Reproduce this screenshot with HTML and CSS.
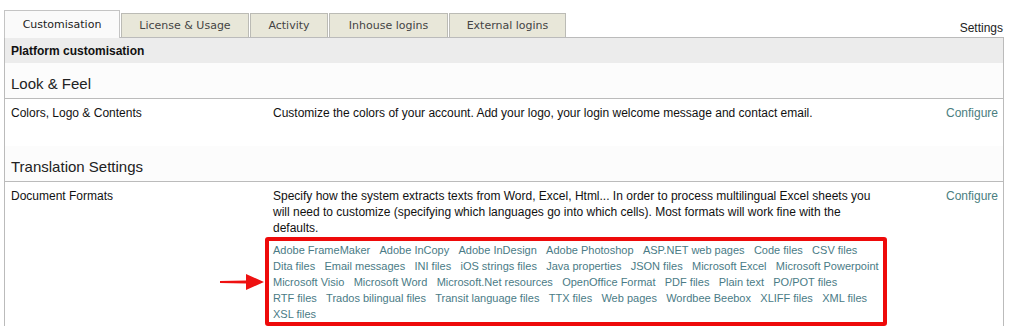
FILE: index.html
```html
<!DOCTYPE html>
<html>
<head>
<meta charset="utf-8">
<link rel="stylesheet" href="styles.css">
</head>
<body>
<div class="page">
  <div class="tabbar">
    <div class="tab active tab-cust">Customisation</div>
    <div class="tab tab-lic">License &amp; Usage</div>
    <div class="tab tab-act">Activity</div>
    <div class="tab tab-in">Inhouse logins</div>
    <div class="tab tab-ext">External logins</div>
    <div class="settings">Settings</div>
  </div>
  <div class="panel">
    <div class="panel-head">Platform customisation</div>
    <div class="section-title">Look &amp; Feel</div>
    <div class="row row-first">
      <div class="label">Colors, Logo &amp; Contents</div>
      <div class="desc">Customize the colors of your account. Add your logo, your login welcome message and contact email.</div>
      <div class="action">Configure</div>
    </div>
    <div class="section-title">Translation Settings</div>
    <div class="row">
      <div class="label">Document Formats</div>
      <div class="desc">
        <div class="desc-text">Specify how the system extracts texts from Word, Excel, Html... In order to process multilingual Excel sheets you will need to customize (specifying which languages go into which cells). Most formats will work fine with the defaults.</div>
        <div class="formats-wrap">
          <svg class="arrow" width="46" height="20" viewBox="0 0 46 20"><path d="M0 9 L26 8.5 L26 2 L44 10 L26 18 L26 11.5 L0 11 Z" fill="#ee1111"/></svg>
          <div class="formats">
            <span>Adobe FrameMaker</span><span>Adobe InCopy</span><span>Adobe InDesign</span><span>Adobe Photoshop</span><span>ASP.NET web pages</span><span>Code files</span><span>CSV files</span><span>Dita files</span><span>Email messages</span><span>INI files</span><span>iOS strings files</span><span>Java properties</span><span>JSON files</span><span>Microsoft Excel</span><span>Microsoft Powerpoint</span><span>Microsoft Visio</span><span>Microsoft Word</span><span>Microsoft.Net resources</span><span>OpenOffice Format</span><span>PDF files</span><span>Plain text</span><span>PO/POT files</span><span>RTF files</span><span>Trados bilingual files</span><span>Transit language files</span><span>TTX files</span><span>Web pages</span><span>Wordbee Beebox</span><span>XLIFF files</span><span>XML files</span><span>XSL files</span>
          </div>
        </div>
      </div>
      <div class="action">Configure</div>
    </div>
  </div>
</div>
</body>
</html>
```
FILE: styles.css
```css
html, body {
  margin: 0;
  padding: 0;
  background: #ffffff;
}
body {
  font-family: "Liberation Sans", Arial, sans-serif;
  font-size: 12px;
  color: #111;
  overflow: hidden;
}
.page {
  padding: 10px 5px 0 4px;
}
.tabbar {
  display: flex;
  align-items: flex-end;
  gap: 1px;
  height: 27px;
}
.tab {
  font-family: "DejaVu Sans", Verdana, sans-serif;
  font-size: 11px;
  color: #444;
  background: #e8e7d9;
  border: 1px solid #bbbbb5;
  border-bottom: none;
  height: 24px;
  line-height: 24px;
  padding: 0;
  text-align: center;
  box-sizing: border-box;
  white-space: nowrap;
  overflow: hidden;
}
.tab-cust { width: 116px; }
.tab-lic { width: 128px; }
.tab-act { width: 78px; }
.tab-in { width: 119px; }
.tab-ext { width: 117px; }
.tab.active {
  background: #fafafa;
  color: #222;
  height: 28px;
  line-height: 28px;
  margin-bottom: -1px;
  position: relative;
  z-index: 1;
  border-color: #c4c4c4;
}
.settings {
  margin-left: auto;
  padding-right: 1px;
  padding-bottom: 2px;
  line-height: 14px;
  color: #222;
}
.panel {
  border: 1px solid #bbbbbb;
  border-bottom: none;
  background: #fcfcfc;
}
.panel-head {
  background: #ececec;
  font-weight: bold;
  height: 25px;
  line-height: 26px;
  padding: 0 6px;
}
.section-title {
  font-size: 15px;
  line-height: 17px;
  padding: 12px 6px 6px;
  color: #222;
  border-bottom: 1px solid #bbbbbb;
}
.row {
  display: grid;
  grid-template-columns: 262px 612px 1fr;
  padding: 6px 5px 0 6px;
  background: #ffffff;
  line-height: 16px;
}
.row-first {
  padding-bottom: 25px;
}
.desc-text {
  width: 610px;
}
.action {
  text-align: right;
  color: #4a7e80;
}
.formats-wrap {
  position: relative;
  margin: 1px 0 0 -8px;
}
.arrow {
  position: absolute;
  left: -45px;
  top: 35px;
}
.formats {
  border: 4px solid #ee0a0a;
  border-radius: 3px;
  padding: 1px 0 0 4px;
  width: 610px;
  display: flex;
  flex-wrap: wrap;
  column-gap: 9.3px;
  font-size: 11px;
  line-height: 16px;
  color: #4a7b86;
}
```
